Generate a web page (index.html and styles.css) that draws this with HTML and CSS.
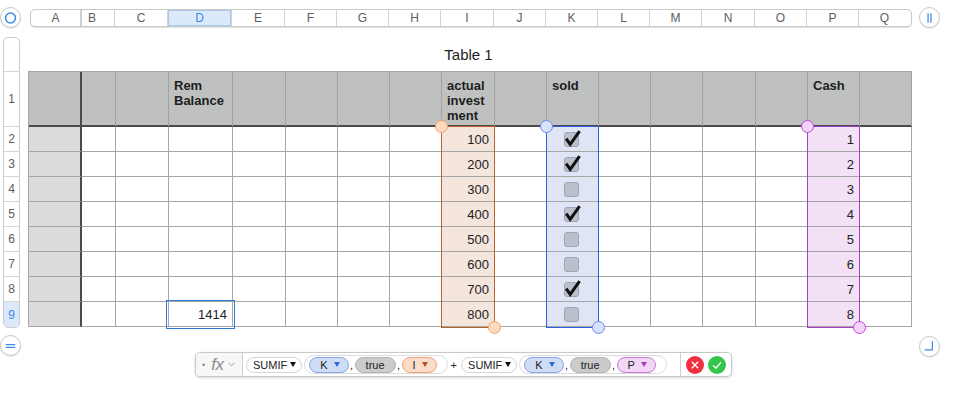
FILE: index.html
```html
<!DOCTYPE html>
<html>
<head>
<meta charset="utf-8">
<link rel="stylesheet" href="styles.css">
</head>
<body>
<svg class="defs" width="0" height="0">
  <symbol id="cb-on" viewBox="0 0 18 18">
    <rect x="1.5" y="2.5" width="14" height="14" rx="2.5" fill="#bcc0cd" stroke="#9fa4b4"/>
    <path d="M3.2 8.6 L7.2 14.4 L16.6 1.2" fill="none" stroke="#111" stroke-width="3"/>
  </symbol>
  <symbol id="cb-off" viewBox="0 0 18 18">
    <rect x="1.5" y="2.5" width="14" height="14" rx="2.5" fill="#bcc0cd" stroke="#9fa4b4"/>
  </symbol>
</svg>
<div class="app">
  <div class="cbtn tl-btn">
    <svg width="20" height="20" viewBox="0 0 20 20"><circle cx="10" cy="10" r="5.2" fill="none" stroke="#3d8be4" stroke-width="1.6"/></svg>
  </div>
  <div class="colbar">
    <span class="w51 frz">A</span><span class="w34 lft">B</span><span class="w53">C</span><span class="w64 sel">D</span><span class="w53">E</span><span class="w52">F</span><span class="w52">G</span><span class="w52">H</span><span class="w53">I</span><span class="w52">J</span><span class="w52">K</span><span class="w52">L</span><span class="w52">M</span><span class="w53">N</span><span class="w52">O</span><span class="w52">P</span><span class="w51 last">Q</span>
  </div>
  <div class="cbtn tr-btn">
    <svg width="20" height="20" viewBox="0 0 20 20"><path d="M8.5 5 V15 M11.5 5 V15" stroke="#3d8be4" stroke-width="1.3"/></svg>
  </div>

  <div class="rowbar">
    <div class="rb blank"></div>
    <div class="rb r1">1</div>
    <div class="rb">2</div>
    <div class="rb">3</div>
    <div class="rb">4</div>
    <div class="rb">5</div>
    <div class="rb">6</div>
    <div class="rb">7</div>
    <div class="rb">8</div>
    <div class="rb sel">9</div>
  </div>

  <div class="sheet">
    <div class="title">Table 1</div>
    <div class="grid">
      <div class="c h a"></div><div class="c h"></div><div class="c h"></div><div class="c h">Rem<br>Balance</div><div class="c h"></div><div class="c h"></div><div class="c h"></div><div class="c h"></div><div class="c h">actual<br>invest<br>ment</div><div class="c h"></div><div class="c h">sold</div><div class="c h"></div><div class="c h"></div><div class="c h"></div><div class="c h"></div><div class="c h">Cash</div><div class="c h"></div>

      <div class="c a"></div><div class="c"></div><div class="c"></div><div class="c"></div><div class="c"></div><div class="c"></div><div class="c"></div><div class="c"></div><div class="c n i">100</div><div class="c"></div><div class="c k"><svg class="cb"><use href="#cb-on"/></svg></div><div class="c"></div><div class="c"></div><div class="c"></div><div class="c"></div><div class="c n p">1</div><div class="c"></div>

      <div class="c a"></div><div class="c"></div><div class="c"></div><div class="c"></div><div class="c"></div><div class="c"></div><div class="c"></div><div class="c"></div><div class="c n i">200</div><div class="c"></div><div class="c k"><svg class="cb"><use href="#cb-on"/></svg></div><div class="c"></div><div class="c"></div><div class="c"></div><div class="c"></div><div class="c n p">2</div><div class="c"></div>

      <div class="c a"></div><div class="c"></div><div class="c"></div><div class="c"></div><div class="c"></div><div class="c"></div><div class="c"></div><div class="c"></div><div class="c n i">300</div><div class="c"></div><div class="c k"><svg class="cb"><use href="#cb-off"/></svg></div><div class="c"></div><div class="c"></div><div class="c"></div><div class="c"></div><div class="c n p">3</div><div class="c"></div>

      <div class="c a"></div><div class="c"></div><div class="c"></div><div class="c"></div><div class="c"></div><div class="c"></div><div class="c"></div><div class="c"></div><div class="c n i">400</div><div class="c"></div><div class="c k"><svg class="cb"><use href="#cb-on"/></svg></div><div class="c"></div><div class="c"></div><div class="c"></div><div class="c"></div><div class="c n p">4</div><div class="c"></div>

      <div class="c a"></div><div class="c"></div><div class="c"></div><div class="c"></div><div class="c"></div><div class="c"></div><div class="c"></div><div class="c"></div><div class="c n i">500</div><div class="c"></div><div class="c k"><svg class="cb"><use href="#cb-off"/></svg></div><div class="c"></div><div class="c"></div><div class="c"></div><div class="c"></div><div class="c n p">5</div><div class="c"></div>

      <div class="c a"></div><div class="c"></div><div class="c"></div><div class="c"></div><div class="c"></div><div class="c"></div><div class="c"></div><div class="c"></div><div class="c n i">600</div><div class="c"></div><div class="c k"><svg class="cb"><use href="#cb-off"/></svg></div><div class="c"></div><div class="c"></div><div class="c"></div><div class="c"></div><div class="c n p">6</div><div class="c"></div>

      <div class="c a"></div><div class="c"></div><div class="c"></div><div class="c"></div><div class="c"></div><div class="c"></div><div class="c"></div><div class="c"></div><div class="c n i">700</div><div class="c"></div><div class="c k"><svg class="cb"><use href="#cb-on"/></svg></div><div class="c"></div><div class="c"></div><div class="c"></div><div class="c"></div><div class="c n p">7</div><div class="c"></div>

      <div class="c a"></div><div class="c"></div><div class="c"></div><div class="c n">1414</div><div class="c"></div><div class="c"></div><div class="c"></div><div class="c"></div><div class="c n i">800</div><div class="c"></div><div class="c k"><svg class="cb"><use href="#cb-off"/></svg></div><div class="c"></div><div class="c"></div><div class="c"></div><div class="c"></div><div class="c n p">8</div><div class="c"></div>

      <div class="rng rng-i"><span class="hdl hdl-tl"></span><span class="hdl hdl-br"></span></div>
      <div class="rng rng-k"><span class="hdl hdl-tl"></span><span class="hdl hdl-br"></span></div>
      <div class="rng rng-p"><span class="hdl hdl-tl"></span><span class="hdl hdl-br"></span></div>
      <div class="cursel"></div>
    </div>
  </div>
  <div class="side"></div>

  <div class="cbtn bl-btn">
    <svg width="20" height="20" viewBox="0 0 20 20"><path d="M5 8.5 H15 M5 11.5 H15" stroke="#3d8be4" stroke-width="1.3"/></svg>
  </div>
  <div class="fbar">
    <div class="fx">
      <span class="dot">•</span><span class="fxl">fx</span>
      <svg width="7" height="5" viewBox="0 0 7 5"><path d="M0.5 0.8 L3.5 3.8 L6.5 0.8" fill="none" stroke="#9a9a9a" stroke-width="1"/></svg>
    </div>
    <div class="fexpr">
      <span class="fn">SUMIF<i class="tri dark"></i></span>
      <span class="args">
        <span class="ref blue">K<i class="tri"></i></span><span class="sep">,</span><span class="bool">true</span><span class="sep">,</span><span class="ref orange">I<i class="tri"></i></span>
      </span>
      <span class="plus">+</span>
      <span class="fn">SUMIF<i class="tri dark"></i></span>
      <span class="args">
        <span class="ref blue">K<i class="tri"></i></span><span class="sep">,</span><span class="bool">true</span><span class="sep">,</span><span class="ref purple">P<i class="tri"></i></span>
      </span>
    </div>
    <div class="fbtns">
      <span class="btn cancel"><svg width="18" height="18" viewBox="0 0 18 18"><path d="M5.8 5.8 L12.2 12.2 M12.2 5.8 L5.8 12.2" stroke="#fff" stroke-width="1.3"/></svg></span>
      <span class="btn ok"><svg width="18" height="18" viewBox="0 0 18 18"><path d="M5 9.4 L7.8 12.2 L13 6.2" fill="none" stroke="#fff" stroke-width="1.3"/></svg></span>
    </div>
  </div>
  <div class="cbtn br-btn">
    <svg width="20" height="20" viewBox="0 0 20 20"><path d="M13 4 V13 H5" fill="none" stroke="#3d8be4" stroke-width="1.3"/></svg>
  </div>
</div>
</body>
</html>
```
FILE: styles.css
```css
* { box-sizing: border-box; }
html, body { margin: 0; padding: 0; background: #fff; }
body {
  font-family: "Liberation Sans", Arial, sans-serif;
  color: #222;
  width: 965px;
  height: 406px;
  overflow: hidden;
}
.defs { position: absolute; width: 0; height: 0; }

.app {
  display: grid;
  grid-template-columns: 28px 884px 53px;
  grid-template-rows: 37px 291px 78px;
}

/* round corner buttons */
.cbtn {
  width: 21px;
  height: 21px;
  border-radius: 50%;
  border: 1px solid #c6c6c6;
  background: #fff;
  box-shadow: 0 1px 1px rgba(0,0,0,0.08);
  display: flex;
  align-items: center;
  justify-content: center;
}
.cbtn svg { display: block; }
.tl-btn { margin-top: 7px; }
.tr-btn { margin: 7px 0 0 7px; }
.bl-btn { margin-top: 7px; }
.br-btn { margin: 8px 0 0 7px; }

/* column header bar */
.colbar {
  margin: 9px 0 0 2px;
  width: 882px;
  height: 18px;
  display: flex;
  border: 1px solid #c9c9c9;
  border-radius: 5px;
  background: #fff;
  box-shadow: 0 1px 1px rgba(0,0,0,0.12);
  overflow: hidden;
}
.colbar span {
  flex: none;
  border-right: 1px solid #d3d3d3;
  font-size: 12px;
  color: #5c5c5c;
  display: flex;
  align-items: center;
  justify-content: center;
}
.colbar span.frz { border-right: 2px solid #d0d0d0; }
.colbar span.lft { width: 33px; justify-content: flex-start; padding-left: 6px; }
.colbar span.last { border-right: none; }
.colbar span.sel {
  background: #dce9fa;
  color: #3d8be4;
  box-shadow: inset 0 0 0 1px #a9c8ee;
}
.w34 { width: 34px; }
.w51 { width: 51px; }
.w52 { width: 52px; }
.w53 { width: 53px; }
.w64 { width: 64px; }

/* row header bar */
.rowbar {
  margin-left: 3px;
  width: 17px;
  height: 291px;
  border: 1px solid #cbcbcb;
  border-radius: 5px;
  display: flex;
  flex-direction: column;
  overflow: hidden;
  background: #fff;
}
.rb {
  flex: none;
  height: 25px;
  border-bottom: 1px solid #d6d6d6;
  display: flex;
  align-items: center;
  justify-content: center;
  font-size: 12px;
  color: #5c5c5c;
}
.rb.blank { height: 34px; }
.rb.r1 { height: 55px; }
.rb.sel {
  border-bottom: none;
  background: #dce9fa;
  color: #3d8be4;
  border-radius: 0 0 4px 4px;
}

/* sheet */
.sheet { display: flex; flex-direction: column; }
.title {
  height: 35px;
  display: flex;
  align-items: center;
  justify-content: center;
  font-size: 15px;
  color: #222;
  padding-right: 3px;
  margin-bottom: -1px;
}
.grid {
  position: relative;
  display: grid;
  grid-template-columns: 53px 34px 53px 64px 53px 52px 52px 52px 53px 52px 52px 52px 52px 53px 52px 52px 52px;
  grid-template-rows: 55px repeat(8, 25px);
  width: 884px;
  border-left: 1px solid #a6a6a6;
  border-top: 1px solid #a6a6a6;
}
.c {
  border-right: 1px solid #a6a6a6;
  border-bottom: 1px solid #a6a6a6;
  font-size: 13px;
  color: #222;
}
.h {
  background: #bfc1c0;
  border-bottom: 2px solid #4a4a4a;
  border-right-color: #a2a2a2;
  font-weight: bold;
  line-height: 15px;
  padding: 6px 3px 0 5px;
  color: #1d1d1d;
}
.a {
  background: #dcdcdc;
  border-right: 2px solid #4a4a4a;
}
.h.a { background: #bfc1c0; }
.n {
  display: flex;
  align-items: center;
  justify-content: flex-end;
  padding-right: 5px;
}
.i { background: #f4e5dd; }
.k {
  background: #dfe5f5;
  display: flex;
  align-items: center;
  justify-content: center;
}
.p { background: #f3e1f6; }
.cb { width: 18px; height: 18px; display: block; margin-left: -1px; }

/* selection ranges (overlays) */
.rng {
  position: absolute;
  top: 54px;
  height: 202px;
  width: 54px;
  border: 1px solid;
}
.rng-i { left: 412px; border-color: #b8622f; }
.rng-k { left: 517px; width: 53px; border-color: #2b60e0; }
.rng-p { left: 778px; width: 53px; border-color: #a43fc8; }
.hdl {
  position: absolute;
  width: 13px;
  height: 13px;
  border-radius: 50%;
  border: 1px solid;
}
.hdl-tl { left: -7px; top: -7px; }
.hdl-br { right: -7px; bottom: -7px; }
.rng-i .hdl { background: #fed9bd; border-color: #f2a46e; }
.rng-k .hdl { background: #d9e2fb; border-color: #6c88f0; }
.rng-p .hdl { background: #f2d4f8; border-color: #ba4bd6; }

.cursel {
  position: absolute;
  left: 137px;
  top: 228px;
  width: 69px;
  height: 29px;
  border: 1px solid #2d7bd6;
}

/* formula bar */
.fbar {
  grid-column: 2;
  margin: 24px 0 0 167px;
  width: 537px;
  height: 25px;
  border: 1px solid #c8c8c8;
  border-radius: 5px;
  background: #fff;
  box-shadow: 0 1px 3px rgba(0,0,0,0.16);
  display: flex;
  align-items: center;
  font-size: 11px;
  color: #222;
}
.fx {
  width: 47px;
  height: 100%;
  border-right: 1px solid #d0d0d0;
  background: #f7f7f7;
  border-radius: 4px 0 0 4px;
  display: flex;
  align-items: center;
  padding-left: 6px;
  color: #8e8e8e;
}
.dot { font-size: 9px; margin-right: 6px; }
.fxl {
  font-style: italic;
  font-size: 17px;
  margin-right: 5px;
  letter-spacing: -0.5px;
}
.fexpr {
  flex: 1;
  display: flex;
  align-items: center;
  padding-left: 3px;
  height: 100%;
}
.fn {
  height: 16px;
  border: 1px solid #d6d6d6;
  border-radius: 8px;
  background: #fff;
  display: flex;
  align-items: center;
  padding: 0 5px 0 6px;
  gap: 3px;
}
.tri {
  display: inline-block;
  width: 0;
  height: 0;
  border-left: 3.5px solid transparent;
  border-right: 3.5px solid transparent;
  border-top: 5px solid currentColor;
}
.tri.dark { color: #111; }
.args {
  height: 19px;
  border: 1px solid #dcdcdc;
  border-radius: 10px;
  display: flex;
  align-items: center;
  padding: 0 10px 0 4px;
  margin-left: 2px;
}
.ref {
  height: 16px;
  border: 1px solid;
  border-radius: 8px;
  display: flex;
  align-items: center;
  padding: 0 8px 0 10px;
  gap: 6px;
  color: #222;
}
.ref .tri { color: inherit; }
.ref.blue { background: #cfdcf6; border-color: #86a7e6; }
.ref.blue .tri { color: #2f6bd8; }
.ref.orange { background: #fbdcc8; border-color: #eba37a; }
.ref.orange .tri { color: #b5561f; }
.ref.purple { background: #f1d6f6; border-color: #c77ad8; }
.ref.purple .tri { color: #a640c6; }
.bool {
  height: 16px;
  border: 1px solid #b3b3b3;
  background: #cbcbcb;
  border-radius: 8px;
  display: flex;
  align-items: center;
  padding: 0 10px;
}
.sep { width: 6px; text-align: center; }
.plus { margin: 0 4px 0 3px; }
.fbtns {
  width: 51px;
  height: 100%;
  border-left: 1px solid #d0d0d0;
  display: flex;
  align-items: center;
  gap: 4px;
  padding-left: 5px;
}
.btn {
  width: 18px;
  height: 18px;
  border-radius: 50%;
  display: flex;
  align-items: center;
  justify-content: center;
}
.btn svg { display: block; }
.cancel { background: #f0303e; }
.ok { background: #34c54b; }
```
